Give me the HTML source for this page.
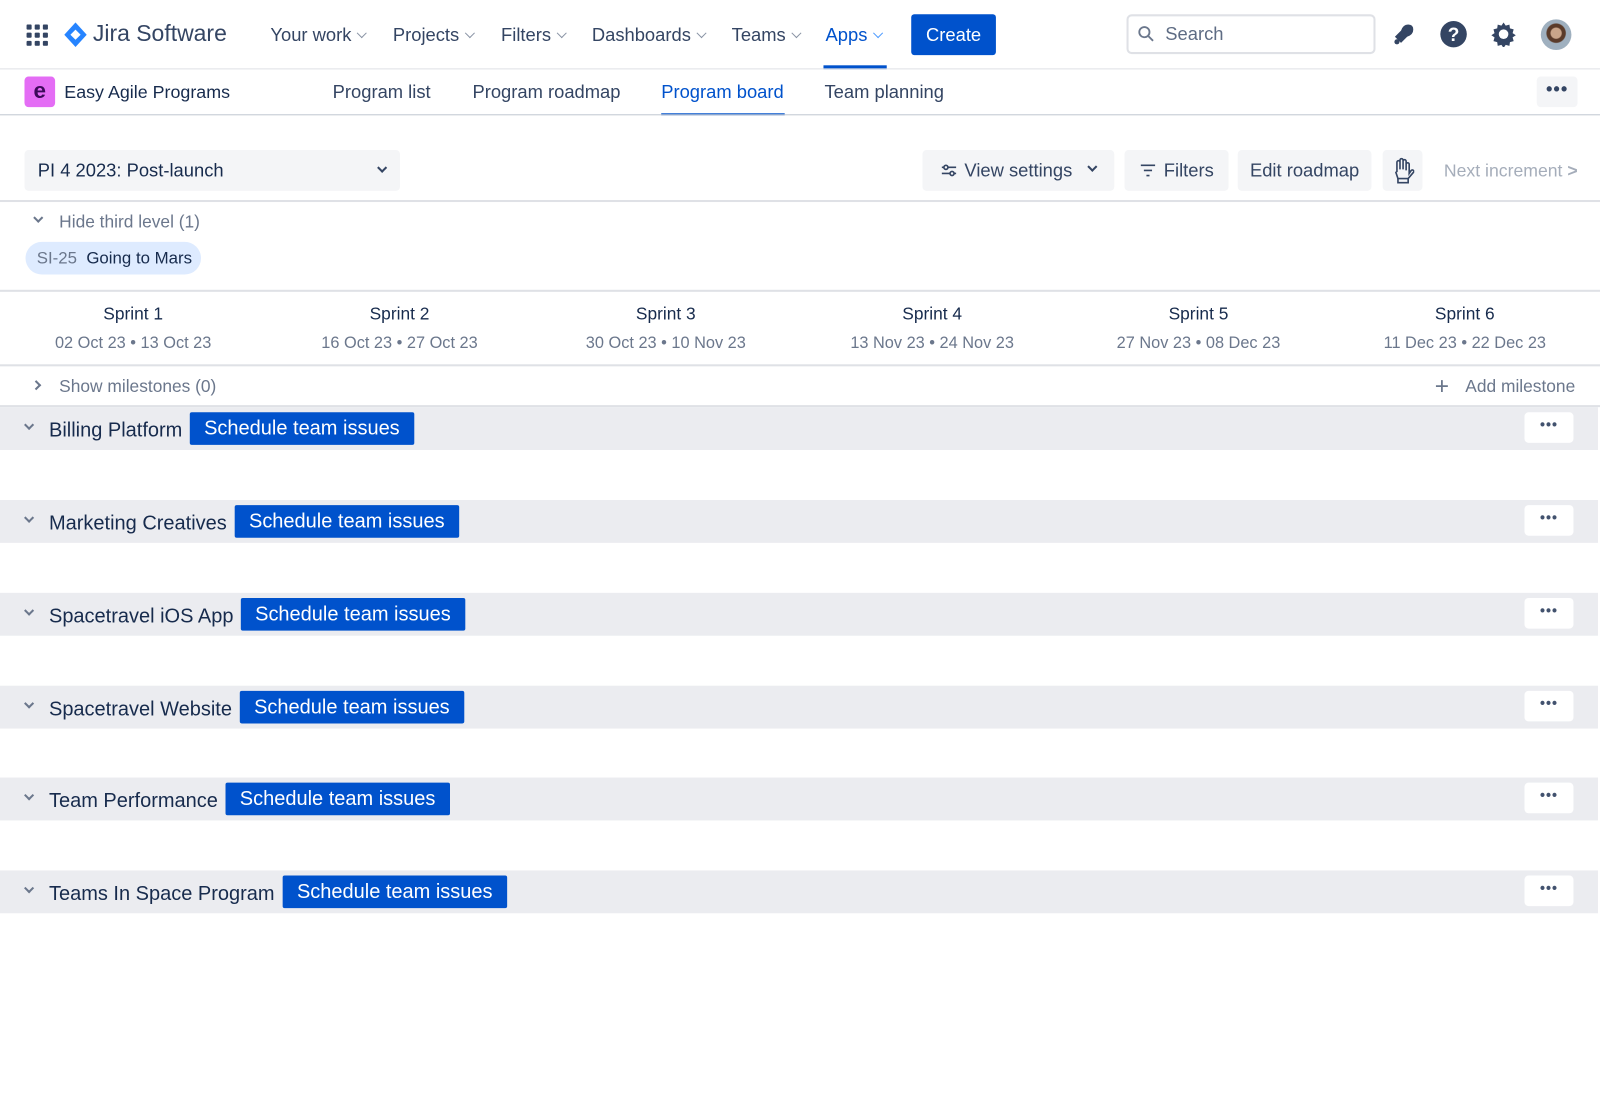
<!DOCTYPE html>
<html><head><meta charset="utf-8"><style>
*{box-sizing:border-box;margin:0;padding:0}
html,body{width:1600px;height:1111px;overflow:hidden;background:#fff}
#w{width:1568px;height:1089px;position:relative;transform:scale(1.020408);transform-origin:0 0;font-family:"Liberation Sans",Arial,sans-serif;color:#172b4d}
.a{position:absolute;white-space:nowrap}
.nav{font-size:18px;color:#344563}
.chev{display:inline-block;width:7px;height:7px;border-right:1.5px solid #8993a4;border-bottom:1.5px solid #8993a4;transform:rotate(45deg);margin-left:7px;position:relative;top:-4px}
.hr{position:absolute;left:0;width:1568px;height:2px;background:#dfe1e6}
.btn{position:absolute;background:#f4f5f7;border-radius:4px;font-size:18px;color:#344563;display:flex;align-items:center;justify-content:center}
.row{position:absolute;left:0;width:1566px;height:42px;background:#ebecf0}
.row .t{position:absolute;left:48px;top:12px;font-size:19.6px;color:#172b4d}
.row .c{position:absolute;left:25px;top:14px;width:7px;height:7px;border-right:2px solid #6b778c;border-bottom:2px solid #6b778c;transform:rotate(45deg)}
.row .s{position:absolute;top:5px;height:32px;background:#0052cc;color:#fff;font-size:19.6px;padding:0 14px;line-height:32px;border-radius:2px}
.row .m{position:absolute;left:1494px;top:5px;width:48px;height:30px;background:#fff;border-radius:4px;text-align:center;font-size:14px;line-height:24px;color:#42526e;letter-spacing:1px;font-weight:bold}
.sp{position:absolute;top:298px;width:261px;text-align:center}
.sp b{display:block;font-weight:normal;font-size:17px;color:#172b4d}
.sp i{display:block;font-style:normal;font-size:16px;color:#6b778c;margin-top:10px}
</style></head><body><div id="w">
<svg class="a" style="left:26px;top:24px" width="21" height="21" viewBox="0 0 21 21" fill="#344563">
<rect x="0" y="0" width="5" height="5" rx="1"/><rect x="8" y="0" width="5" height="5" rx="1"/><rect x="16" y="0" width="5" height="5" rx="1"/>
<rect x="0" y="8" width="5" height="5" rx="1"/><rect x="8" y="8" width="5" height="5" rx="1"/><rect x="16" y="8" width="5" height="5" rx="1"/>
<rect x="0" y="16" width="5" height="5" rx="1"/><rect x="8" y="16" width="5" height="5" rx="1"/><rect x="16" y="16" width="5" height="5" rx="1"/></svg>
<svg class="a" style="left:63px;top:22px" width="22" height="24" viewBox="0 0 22 24"><path d="M11 0 L22 12 L11 24 L0 12Z" fill="#2684ff"/><path d="M11 7 L16 12 L11 17 L6 12Z" fill="#fff"/></svg>
<div class="a" style="left:91px;top:20px;font-size:22.5px;color:#344563">Jira Software</div>
<div class="a nav" style="left:265px;top:24px">Your work<span class="chev"></span></div>
<div class="a nav" style="left:385px;top:24px">Projects<span class="chev"></span></div>
<div class="a nav" style="left:491px;top:24px">Filters<span class="chev"></span></div>
<div class="a nav" style="left:580px;top:24px">Dashboards<span class="chev"></span></div>
<div class="a nav" style="left:717px;top:24px">Teams<span class="chev"></span></div>
<div class="a nav" style="left:809px;top:24px;color:#0052cc">Apps<span class="chev" style="border-color:#4c9aff"></span></div>
<div class="a" style="left:807px;top:64px;width:62px;height:4px;background:#0052cc"></div>
<div class="a" style="left:893px;top:14px;width:83px;height:40px;background:#0052cc;border-radius:3px;color:#fff;font-size:18px;text-align:center;line-height:40px">Create</div>
<div class="a" style="left:1104px;top:14px;width:244px;height:39px;border:2px solid #dfe1e6;border-radius:5px"></div>
<svg class="a" style="left:1115px;top:25px" width="16" height="16" viewBox="0 0 16 16" fill="none" stroke="#6b778c" stroke-width="1.8"><circle cx="6.5" cy="6.5" r="5"/><path d="M10.5 10.5 L15 15"/></svg>
<div class="a" style="left:1142px;top:23px;font-size:18px;color:#5e6c84">Search</div>
<svg class="a" style="left:1364px;top:21px" width="24" height="24" viewBox="0 0 24 24" fill="#344563"><path d="M3 15 L9 9 Q11 3 16 3 Q21 3 21 8 Q21 13 15 15 L9 21 Z"/><circle cx="5" cy="20" r="2.5"/></svg>
<svg class="a" style="left:1411px;top:20px" width="27" height="27" viewBox="0 0 26 26"><circle cx="13" cy="13" r="12.5" fill="#344563"/><text x="13" y="19.5" text-anchor="middle" font-family="Liberation Sans" font-weight="bold" font-size="18" fill="#fff">?</text></svg>
<svg class="a" style="left:1461px;top:21px" width="25" height="25" viewBox="0 0 24 24"><path d="M12 1 l2 3 3.5-1 .5 3.5 3.5 1-1 3.5 3 2-3 2 1 3.5-3.5 1-.5 3.5-3.5-1-2 3-2-3-3.5 1-.5-3.5-3.5-1 1-3.5-3-2 3-2-1-3.5 3.5-1 .5-3.5 3.5 1z" fill="#344563"/><circle cx="12" cy="12" r="4.5" fill="#fff"/></svg>
<div class="a" style="left:1510px;top:19px;width:30px;height:30px;border-radius:50%;background:radial-gradient(circle at 50% 45%,#c9a58a 0 5px,#5a3b2a 6px 9px,#9fb0bf 10px)"></div>
<div class="hr" style="top:67px;height:1px"></div>
<div class="a" style="left:24px;top:75px;width:30px;height:30px;background:#e46df5;border-radius:4px;color:#3b0a5a;font-weight:bold;font-size:22px;text-align:center;line-height:28px">e</div>
<div class="a" style="left:63px;top:80px;font-size:17.5px;color:#172b4d">Easy Agile Programs</div>
<div class="a nav" style="left:326px;top:80px">Program list</div>
<div class="a nav" style="left:463px;top:80px">Program roadmap</div>
<div class="a nav" style="left:648px;top:80px;color:#0052cc">Program board</div>
<div class="a" style="left:648px;top:111px;width:121px;height:2px;background:#0052cc"></div>
<div class="a nav" style="left:808px;top:80px">Team planning</div>
<div class="a" style="left:1506px;top:75px;width:40px;height:30px;background:#f4f5f7;border-radius:4px;text-align:center;line-height:24px;font-size:18px;font-weight:bold;color:#344563;letter-spacing:1px">•••</div>
<div class="hr" style="top:112px;height:1px;background:#c1c7d0"></div>
<div class="btn" style="left:24px;top:147px;width:368px;height:40px;justify-content:flex-start;padding-left:13px;color:#172b4d">PI 4 2023: Post-launch<span class="chev" style="position:absolute;left:340px;top:14px;border-color:#344563;border-width:2px"></span></div>
<div class="btn" style="left:904px;top:147px;width:188px;height:40px">
<svg width="16" height="14" viewBox="0 0 16 14" style="margin-right:7px" fill="none" stroke="#344563" stroke-width="1.6"><path d="M1 4h14M1 10h14"/><circle cx="5" cy="4" r="2" fill="#f4f5f7"/><circle cx="11" cy="10" r="2" fill="#f4f5f7"/></svg>View settings<span class="chev" style="border-color:#344563;border-width:2px;margin-left:16px"></span></div>
<div class="btn" style="left:1102px;top:147px;width:102px;height:40px">
<svg width="16" height="14" viewBox="0 0 16 14" style="margin-right:8px" stroke="#344563" stroke-width="1.6"><path d="M1 2h14M4 7h8M6.5 12h3"/></svg>Filters</div>
<div class="btn" style="left:1213px;top:147px;width:131px;height:40px">Edit roadmap</div>
<div class="btn" style="left:1355px;top:147px;width:39px;height:40px"><svg width="22" height="26" viewBox="0 0 22 26" fill="none" stroke="#344563" stroke-width="1.6"><path d="M5 14V5a1.5 1.5 0 013 0v7V3a1.5 1.5 0 013 0v9V4a1.5 1.5 0 013 0v9V7a1.5 1.5 0 013 0v9l2-3a1.5 1.5 0 012.5 1.5L16 21H6L4 15z"/><path d="M6 21v4h10v-4"/></svg></div>
<div class="a" style="left:1415px;top:157px;font-size:17.3px;color:#a5adba">Next increment <span style="font-weight:bold">&gt;</span></div>
<div class="hr" style="top:196px"></div>
<span class="a" style="left:34px;top:210px;width:7px;height:7px;border-right:2px solid #6b778c;border-bottom:2px solid #6b778c;transform:rotate(45deg)"></span>
<div class="a" style="left:58px;top:208px;font-size:17px;color:#6b778c">Hide third level (1)</div>
<div class="a" style="left:25px;top:237px;width:172px;height:32px;background:#deebff;border-radius:16px;font-size:16.5px;line-height:32px;padding-left:11px"><span style="color:#6b778c">SI-25</span>&nbsp; <span style="color:#172b4d">Going to Mars</span></div>
<div class="hr" style="top:284px"></div>
<div class="sp" style="left:0"><b>Sprint 1</b><i>02 Oct 23 • 13 Oct 23</i></div>
<div class="sp" style="left:261px"><b>Sprint 2</b><i>16 Oct 23 • 27 Oct 23</i></div>
<div class="sp" style="left:522px"><b>Sprint 3</b><i>30 Oct 23 • 10 Nov 23</i></div>
<div class="sp" style="left:783px"><b>Sprint 4</b><i>13 Nov 23 • 24 Nov 23</i></div>
<div class="sp" style="left:1044px"><b>Sprint 5</b><i>27 Nov 23 • 08 Dec 23</i></div>
<div class="sp" style="left:1305px"><b>Sprint 6</b><i>11 Dec 23 • 22 Dec 23</i></div>
<div class="hr" style="top:357px"></div>
<span class="a" style="left:32px;top:374px;width:7px;height:7px;border-right:2px solid #6b778c;border-bottom:2px solid #6b778c;transform:rotate(-45deg)"></span>
<div class="a" style="left:58px;top:369px;font-size:17px;color:#6b778c">Show milestones (0)</div>
<div class="a" style="left:1406px;top:365px;font-size:24px;color:#6b778c">+</div>
<div class="a" style="left:1436px;top:369px;font-size:17px;color:#6b778c">Add milestone</div>
<div class="hr" style="top:397px"></div>
<div class="row" style="top:399px"><span class="c"></span><span class="t">Billing Platform</span><span class="s" style="left:186px">Schedule team issues</span><span class="m">•••</span></div>
<div class="row" style="top:490px"><span class="c"></span><span class="t">Marketing Creatives</span><span class="s" style="left:230px">Schedule team issues</span><span class="m">•••</span></div>
<div class="row" style="top:581px"><span class="c"></span><span class="t">Spacetravel iOS App</span><span class="s" style="left:236px">Schedule team issues</span><span class="m">•••</span></div>
<div class="row" style="top:672px"><span class="c"></span><span class="t">Spacetravel Website</span><span class="s" style="left:235px">Schedule team issues</span><span class="m">•••</span></div>
<div class="row" style="top:762px"><span class="c"></span><span class="t">Team Performance</span><span class="s" style="left:221px">Schedule team issues</span><span class="m">•••</span></div>
<div class="row" style="top:853px"><span class="c"></span><span class="t">Teams In Space Program</span><span class="s" style="left:277px">Schedule team issues</span><span class="m">•••</span></div>
</div></body></html>
